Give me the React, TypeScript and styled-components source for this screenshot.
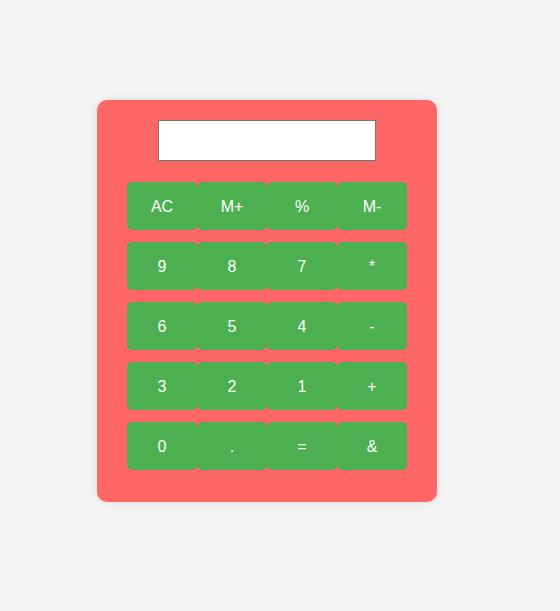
import React from "react";
import styled, { createGlobalStyle } from "styled-components";

const GlobalStyle = createGlobalStyle`
  html, body {
    margin: 0;
    padding: 0;
    background: #f4f4f4;
    font-family: "Liberation Sans", Arial, sans-serif;
  }
`;

const Page = styled.div`
  padding: 100px 0 0 97px;
  min-height: 611px;
  box-sizing: border-box;
`;

const Calculator = styled.div`
  width: 340px;
  height: 402px;
  box-sizing: border-box;
  background: #ff6666;
  border-radius: 10px;
  box-shadow: 0 0 10px rgba(0, 0, 0, 0.1);
  padding: 20px 30px 0;
  display: flex;
  flex-direction: column;
  align-items: center;
`;

const Display = styled.input`
  width: 218px;
  height: 41px;
  box-sizing: border-box;
  border: 1px solid #767676;
  background: #ffffff;
  font-family: "Liberation Sans", Arial, sans-serif;
  font-size: 20px;
  padding: 0 8px;
  margin: 0 0 21px 0;
  outline: none;
`;

const Keypad = styled.div`
  display: grid;
  grid-template-columns: repeat(4, 70px);
  grid-auto-rows: 48px;
  row-gap: 12px;
`;

const Key = styled.button`
  border: none;
  border-radius: 5px;
  background: #4caf50;
  color: #ffffff;
  font-family: "Liberation Sans", Arial, sans-serif;
  font-size: 16px;
  padding: 2px 0 0;
  cursor: pointer;
`;

const keys = [
  "AC", "M+", "%", "M-",
  "9", "8", "7", "*",
  "6", "5", "4", "-",
  "3", "2", "1", "+",
  "0", ".", "=", "&",
];

export default function App() {
  return (
    <>
      <GlobalStyle />
      <Page>
        <Calculator>
          <Display type="text" readOnly />
          <Keypad>
            {keys.map((k) => (
              <Key key={k}>{k}</Key>
            ))}
          </Keypad>
        </Calculator>
      </Page>
    </>
  );
}
